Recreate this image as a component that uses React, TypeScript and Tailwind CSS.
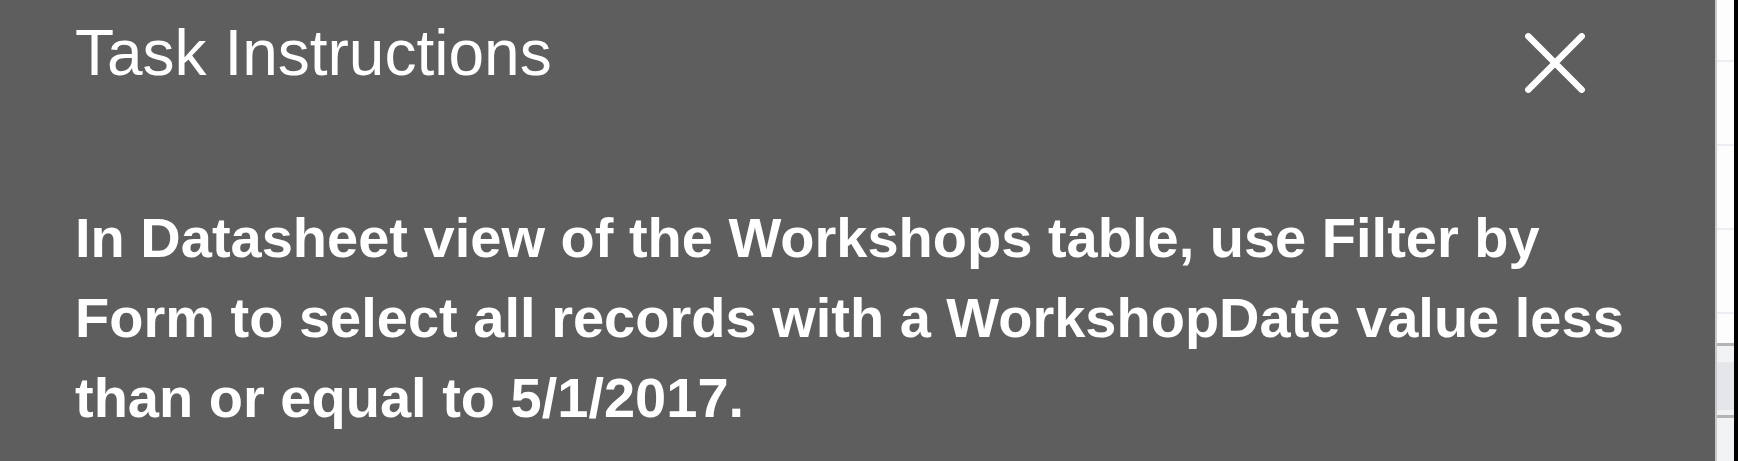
import React from "react";

const gridRows = [62, 84, 84, 84];

const SheetEdge = () => {
  return (
    <div className="flex h-full w-[23px] flex-row">
      <div className="flex h-full w-[19px] flex-col border-l-2 border-[#c9c9c9] bg-[#fdfdfd]">
        {gridRows.map((h, i) => (
          <div
            key={i}
            className="w-full border-b-2 border-[#eceef3]"
            style={{ height: h }}
          ></div>
        ))}
        <div className="h-[29px] w-full"></div>
        <div className="h-[3px] w-full bg-[#b4b4b4]"></div>
        <div className="h-[16px] w-full bg-[#f2f3f5]"></div>
        <div className="h-[48px] w-full bg-[#e5e6e9]"></div>
        <div className="h-[5px] w-full bg-[#f0f1f3]"></div>
        <div className="h-[3px] w-full bg-[#b4b4b4]"></div>
        <div className="w-full flex-1 bg-[#f2f3f5]"></div>
      </div>
      <div className="h-full w-[4px] bg-black"></div>
    </div>
  );
};

const App = () => {
  return (
    <section className="flex h-[461px] w-full flex-row overflow-hidden font-['Liberation_Sans',Arial,sans-serif]">
      <div className="flex h-full flex-1 flex-col bg-[#5e5e5e] pl-[75px] text-white">
        <div className="flex flex-row items-start justify-between pt-[17px] pr-[130px]">
          <h2 className="text-[64px] font-normal leading-[72px]">
            Task Instructions
          </h2>
          <button type="button" className="mt-[16px] h-[60px] w-[60px]">
            <svg viewBox="0 0 60 60" width="60" height="60" fill="none">
              <path
                d="M3.3 3.3 L56.7 56.7 M56.7 3.3 L3.3 56.7"
                stroke="white"
                strokeWidth="6.5"
                strokeLinecap="round"
              />
            </svg>
          </button>
        </div>
        <p className="mt-[105px] w-[1580px] text-[56px] font-bold leading-[80px]">
          In Datasheet view of the Workshops table, use Filter by Form to
          select all records with a WorkshopDate value less than or equal to
          5/1/2017.
        </p>
      </div>
      <SheetEdge />
    </section>
  );
};

export default App;
